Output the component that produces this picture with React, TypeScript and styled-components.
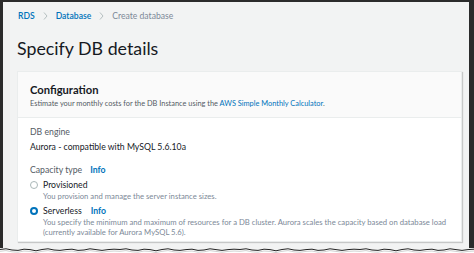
import React from "react";
import styled, { createGlobalStyle } from "styled-components";

const Global = createGlobalStyle`
  html, body { margin: 0; padding: 0; background: #ffffff; }
  body { font-family: Lato, "Open Sans", "Liberation Sans", sans-serif; }
  * { box-sizing: border-box; }
`;

const Frame = styled.div`
  width: 474px;
  height: 253px;
  display: flex;
  flex-direction: column;
  overflow: hidden;
  background: #ffffff;
`;

const Page = styled.div`
  flex: 0 0 248px;
  background: #f2f3f3;
  border-top: 2px solid #2b2b2b;
  border-left: 3px solid #2b2b2b;
  border-right: 5px solid #2b2b2b;
  padding: 8px 7px 0 14px;
  display: flex;
  flex-direction: column;
  overflow: hidden;
`;

const Crumbs = styled.nav`
  display: flex;
  align-items: center;
  gap: 7px;
  height: 12px;
  padding-left: 1px;
  font-size: 8.6px;
`;

const CrumbLink = styled.span`
  color: #0073bb;
  font-weight: 600;
`;

const CrumbCurrent = styled.span`
  color: #7d8998;
`;

const Chevron = styled.svg`
  width: 7px;
  height: 10px;
  flex: none;
`;

const Title = styled.h1`
  margin: 14px 0 0 0;
  font-size: 17.8px;
  line-height: 24px;
  font-weight: 400;
  color: #16191f;
`;

const Card = styled.section`
  margin: 11px 0 6px 0;
  background: #ffffff;
  border: 1px solid #eaeded;
  box-shadow: 1px 1px 1px rgba(0, 0, 0, 0.18);
  flex: 1;
  display: flex;
  flex-direction: column;
`;

const CardHeader = styled.header`
  background: #fafafa;
  border-bottom: 1px solid #eaeded;
  padding: 10px 12px 0 12px;
  height: 46px;
`;

const CardTitle = styled.h2`
  margin: 0;
  font-size: 11.2px;
  line-height: 16px;
  font-weight: 700;
  color: #16191f;
`;

const CardSub = styled.p`
  margin: 0;
  font-size: 7.4px;
  line-height: 12px;
  color: #545b64;
`;

const Link = styled.span`
  color: #0073bb;
`;

const CardBody = styled.div`
  padding: 8px 12px 0 12px;
  display: flex;
  flex-direction: column;
`;

const Label = styled.div<{ $top?: number }>`
  margin-top: ${(p) => p.$top ?? 0}px;
  font-size: 8.7px;
  line-height: 12px;
  color: #545b64;
  display: flex;
  gap: 8px;
`;

const Value = styled.div`
  margin-top: 3px;
  font-size: 8.7px;
  line-height: 12px;
  color: #16191f;
`;

const InfoLink = styled.span`
  color: #0073bb;
  font-weight: 700;
`;

const Option = styled.div<{ $top: number }>`
  margin-top: ${(p) => p.$top}px;
  display: grid;
  grid-template-columns: 13px 1fr;
  align-items: start;
`;

const Radio = styled.span<{ $on?: boolean }>`
  width: 8px;
  height: 8px;
  margin-top: 2px;
  border-radius: 50%;
  background: #ffffff;
  border: ${(p) => (p.$on ? "2.5px solid #0073bb" : "1px solid #aab7b8")};
`;

const OptionName = styled.div`
  font-size: 8.7px;
  line-height: 12px;
  color: #16191f;
  display: flex;
  gap: 9px;
`;

const OptionDesc = styled.div`
  font-size: 7.7px;
  line-height: 10px;
  color: #7d8998;
`;

const Torn = styled.svg`
  display: block;
  width: 474px;
  height: 5px;
  flex: none;
`;

const Sep = () => (
  <Chevron viewBox="0 0 7 10">
    <path d="M2 1.5 L5 5 L2 8.5" fill="none" stroke="#b5bfc0" strokeWidth="1" />
  </Chevron>
);

const ys = [1.5, 0.8, 2, 2.4, 1.2, 1.6, 2.8, 1.5, 0.8, 2, 2.4, 1.6, 1.2, 2.4, 2, 0.8, 1.6, 2.4, 1.6, 1.2];
const jagPts = Array.from({ length: 80 }, (_, i) => [i * 6, ys[i % ys.length]] as const);
const jag = jagPts.map(([x, y]) => `${x},${y}`).join(" ");
const jagBack = [...jagPts].reverse().map(([x, y]) => `${x},${y}`).join(" ");
const jagShadow = jagPts.map(([x, y]) => `${x},${y + 1.8}`).join(" ");

export default function App() {
  return (
    <>
      <Global />
      <Frame>
        <Page>
          <Crumbs>
            <CrumbLink>RDS</CrumbLink>
            <Sep />
            <CrumbLink>Database</CrumbLink>
            <Sep />
            <CrumbCurrent>Create database</CrumbCurrent>
          </Crumbs>
          <Title>Specify DB details</Title>
          <Card>
            <CardHeader>
              <CardTitle>Configuration</CardTitle>
              <CardSub>
                Estimate your monthly costs for the DB Instance using the{" "}
                <Link>AWS Simple Monthly Calculator</Link>.
              </CardSub>
            </CardHeader>
            <CardBody>
              <Label>DB engine</Label>
              <Value>Aurora - compatible with MySQL 5.6.10a</Value>
              <Label $top={11}>
                Capacity type <InfoLink>Info</InfoLink>
              </Label>
              <Option $top={3}>
                <Radio />
                <div>
                  <OptionName>Provisioned</OptionName>
                  <OptionDesc>You provision and manage the server instance sizes.</OptionDesc>
                </div>
              </Option>
              <Option $top={4}>
                <Radio $on />
                <div>
                  <OptionName>
                    Serverless <InfoLink>Info</InfoLink>
                  </OptionName>
                  <OptionDesc>
                    You specify the minimum and maximum of resources for a DB cluster. Aurora scales the capacity based on database load
                    <br />
                    (currently available for Aurora MySQL 5.6).
                  </OptionDesc>
                </div>
              </Option>
            </CardBody>
          </Card>
        </Page>
        <Torn viewBox="0 0 474 5" preserveAspectRatio="none">
          <polygon points={`0,0 474,0 ${jagBack}`} fill="#f2f3f3" />
          <polyline points={jagShadow} fill="none" stroke="#d0d0d0" strokeWidth="1" />
          <polyline points={jag} fill="none" stroke="#222" strokeWidth="1" />
        </Torn>
      </Frame>
    </>
  );
}
